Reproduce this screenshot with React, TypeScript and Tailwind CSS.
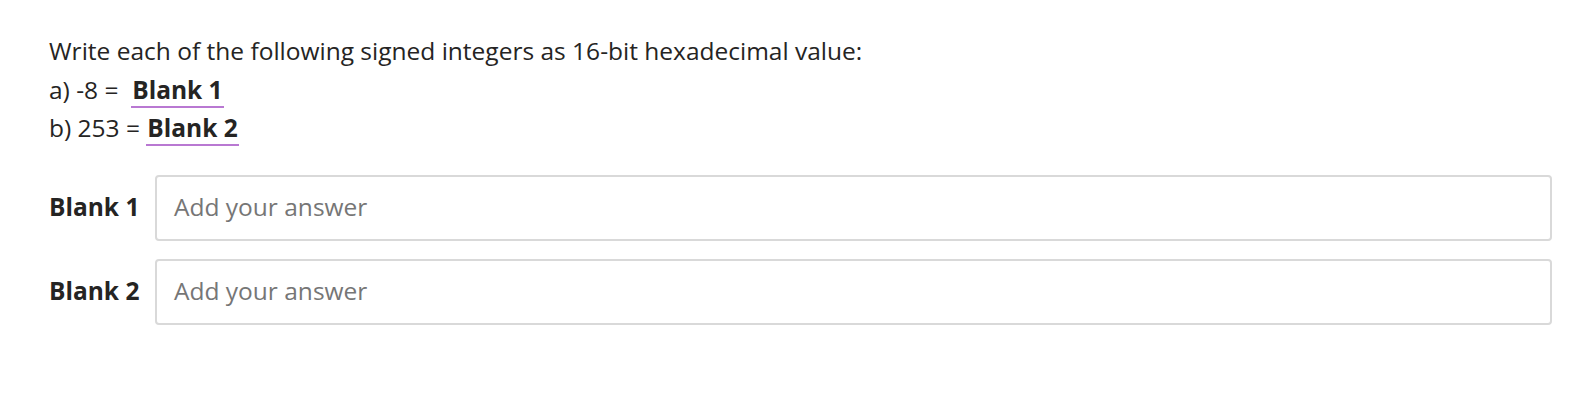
import React from "react";

export default function App() {
  return (
    <div
      className="w-full bg-white text-[#252423] pl-[49px] pr-[33px] pt-[32px]"
      style={{ fontFamily: '"Open Sans", "Noto Sans", sans-serif' }}
    >
      <div className="text-[24.5px] leading-[38.5px]">
        <div>Write each of the following signed integers as 16-bit hexadecimal value:</div>
        <div>
          a) -8 =&nbsp;{" "}
          <span className="font-bold border-b-2 border-[#b978d2] px-[1px]">Blank 1</span>
        </div>
        <div>
          b) 253 ={" "}
          <span className="font-bold border-b-2 border-[#b978d2] px-[1px]">Blank 2</span>
        </div>
      </div>
      <div className="mt-[27px] flex flex-col gap-[18px]">
        {["Blank 1", "Blank 2"].map((b) => (
          <div key={b} className="flex items-center">
            <div className="w-[106px] shrink-0 text-[24.5px] font-bold leading-none">{b}</div>
            <div className="flex-1 h-[66px] border-2 border-[#d9d9d9] rounded-[4px] flex items-center pl-[17px] text-[24.5px] text-[#767676]">
              Add your answer
            </div>
          </div>
        ))}
      </div>
    </div>
  );
}
